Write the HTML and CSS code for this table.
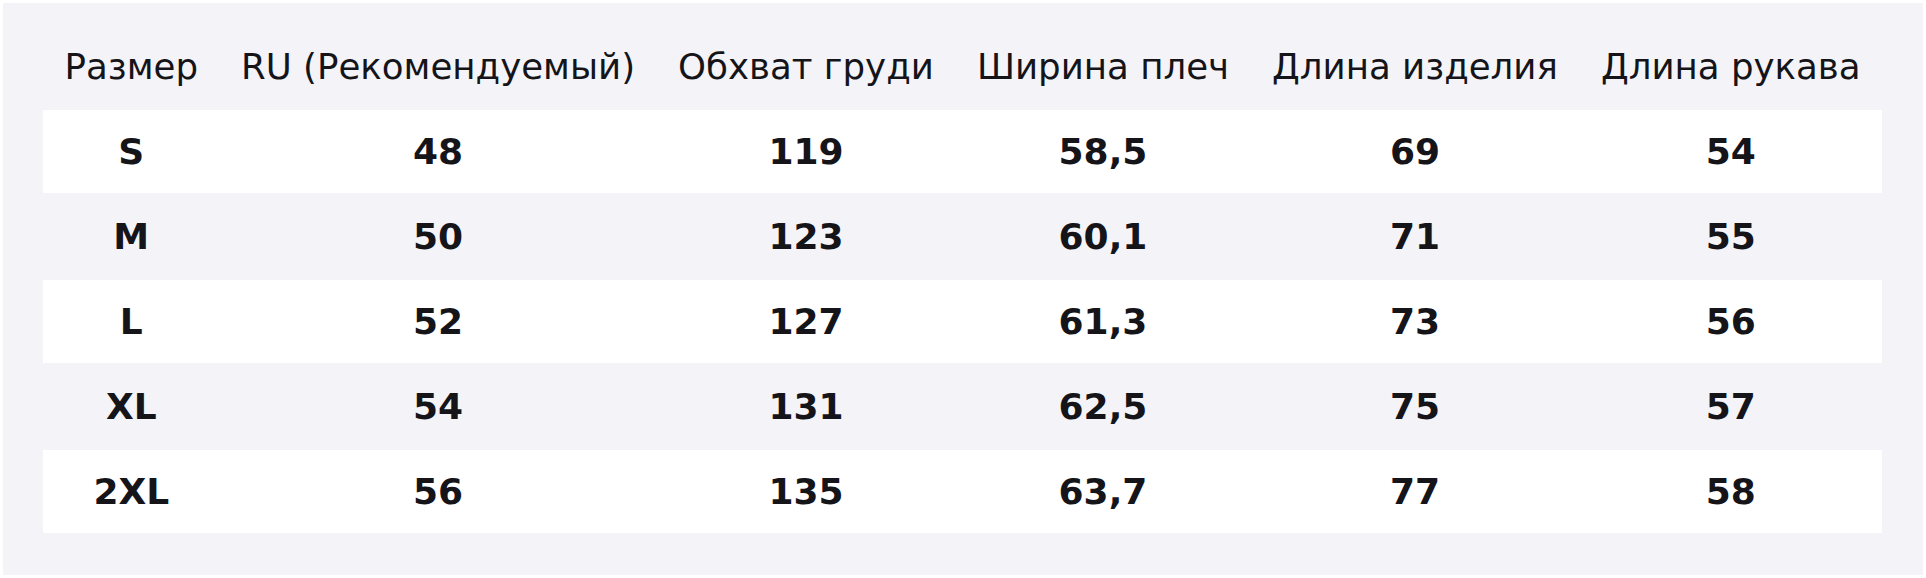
FILE: index.html
```html
<!DOCTYPE html>
<html lang="ru">
<head>
<meta charset="utf-8">
<title>Размеры</title>
<link rel="stylesheet" href="styles.css">
</head>
<body>
<div class="panel">
  <table class="sizes">
    <thead>
      <tr>
        <th>Размер</th>
        <th>RU (Рекомендуемый)</th>
        <th>Обхват груди</th>
        <th>Ширина плеч</th>
        <th>Длина изделия</th>
        <th>Длина рукава</th>
      </tr>
    </thead>
    <tbody>
      <tr class="odd"><td>S</td><td>48</td><td>119</td><td>58,5</td><td>69</td><td>54</td></tr>
      <tr><td>M</td><td>50</td><td>123</td><td>60,1</td><td>71</td><td>55</td></tr>
      <tr class="odd"><td>L</td><td>52</td><td>127</td><td>61,3</td><td>73</td><td>56</td></tr>
      <tr><td>XL</td><td>54</td><td>131</td><td>62,5</td><td>75</td><td>57</td></tr>
      <tr class="odd"><td>2XL</td><td>56</td><td>135</td><td>63,7</td><td>77</td><td>58</td></tr>
    </tbody>
  </table>
</div>
</body>
</html>
```

FILE: styles.css
```css
html, body {
  margin: 0;
  padding: 0;
  background: #ffffff;
}
body {
  padding: 3px;
  font-family: "DejaVu Sans", sans-serif;
  color: #141419;
}
.panel {
  background: #f4f4f8;
  padding: 20px 40px 40px 40px;
}
.sizes {
  border-collapse: separate;
  border-spacing: 0 2px;
}
.sizes th,
.sizes td {
  height: 83px;
  padding: 0 21.5px;
  text-align: center;
  vertical-align: middle;
  white-space: nowrap;
  box-sizing: border-box;
}
.sizes th {
  font-weight: normal;
  font-size: 35.6px;
}
.sizes td {
  font-weight: bold;
  font-size: 36px;
}
.sizes tr.odd td {
  background: #ffffff;
}
```
